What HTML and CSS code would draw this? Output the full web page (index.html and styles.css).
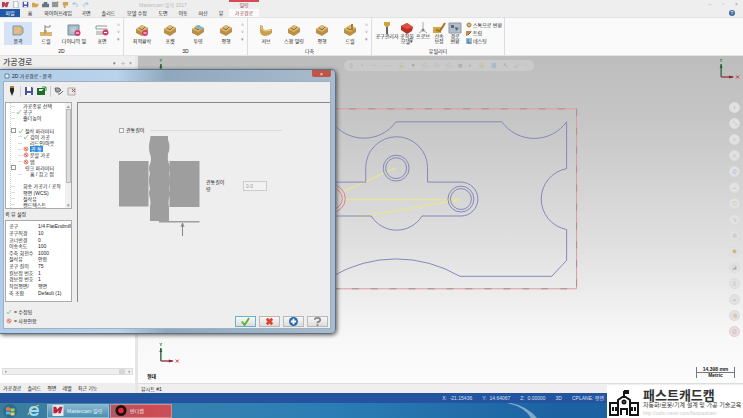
FILE: index.html
```html
<!DOCTYPE html>
<html lang="ko">
<head>
<meta charset="utf-8">
<title>Mastercam 밀링 2017</title>
<link rel="stylesheet" href="styles.css">
</head>
<body>
<svg class="defs" aria-hidden="true">
  <defs>
    <symbol id="contour" viewBox="0 0 14 12"><path d="M2 2h8l2 2v5l-2 2H2z" fill="#dcb477" stroke="#6f9fc4"/><path d="M3 3h6v6H3z" fill="#e2bd85"/></symbol>
    <symbol id="drill" viewBox="0 0 14 12"><path d="M1 8h4v-2h3v2h5v4H1z" fill="#ddb36d"/><path d="M6 1v9M6 3h5V1" fill="none" stroke="#7d8790"/></symbol>
    <symbol id="dynamic" viewBox="0 0 14 12"><path d="M1 1h11v10H1z" fill="#a9bcc4" stroke="#6f8f9f"/><path d="M4 3h5v5H4z" fill="#b9cbd0"/><circle cx="10.500" cy="9" r="3" fill="#d83c74"/><path d="M9 9h3" stroke="#fff"/></symbol>
    <symbol id="face" viewBox="0 0 14 12"><path d="M1 2h11M1 5h11M1 8h7M1 10h7" stroke="#8f9a90" fill="none"/><path d="M1 2v3M12 5v3" stroke="#71a6a0"/><circle cx="10.500" cy="8.500" r="3" fill="#d83c74"/><path d="M9 8.500h3" stroke="#fff"/></symbol>
    <symbol id="block" viewBox="0 0 14 12"><path d="M1 5l6-4 6 3v4l-6 4-6-3z" fill="#b98f45"/><path d="M1 5l6-4 6 3-6 4z" fill="#dcb86f"/><path d="M4 4l3 2 3-3" fill="none" stroke="#806a42"/></symbol>
    <symbol id="blockred" viewBox="0 0 14 12"><use href="#block"/><circle cx="10" cy="9" r="3" fill="#d83c74"/><path d="M8.500 9h3" stroke="#fff"/></symbol>
    <symbol id="blockblue" viewBox="0 0 14 12"><use href="#block"/><path d="M4 2l4-1 4 4-3 1z" fill="#7fb2d6"/></symbol>
    <symbol id="curve" viewBox="0 0 14 12"><path d="M1 1l3 1q-1 4 3 4l6-1v4q-3 3-8 3-4-1-4-5z" fill="#c9a052"/><path d="M2 2q0 7 10 4" fill="none" stroke="#efd59b"/></symbol>
    <symbol id="spindrill" viewBox="0 0 14 12"><use href="#block"/><path d="M9 0v6" stroke="#b07c22" stroke-width="2"/></symbol>
    <symbol id="manager" viewBox="0 0 14 12"><path d="M4 0h6v3L8 5v6H6V5L4 3z" fill="#d1a13c"/><path d="M6 5h2v7H6z" fill="#666"/></symbol>
    <symbol id="redblock" viewBox="0 0 14 12"><path d="M1 4l6-3 6 4-1 4-5 3-6-4z" fill="#bd3025"/><path d="M1 4l6-3 6 4-6 2z" fill="#dc5142"/></symbol>
    <symbol id="probe" viewBox="0 0 14 12"><path d="M7 0v8M3 11l4-3 4 3" fill="none" stroke="#aaa"/><circle cx="7" cy="8" r="1.500" fill="#888"/></symbol>
    <symbol id="trim" viewBox="0 0 14 12"><path d="M1 5h8v6H1z" fill="#d4a64c"/><path d="M4 8l4 1 5-8" fill="none" stroke="#a87721" stroke-width="2"/></symbol>
    <symbol id="transform" viewBox="0 0 14 12"><path d="M1 1h12v10H1z" fill="#b4bec8" stroke="#8f9ba8"/><path d="M3 3h3v3H3zM7 5l4 1-3 3z" fill="#56697c"/></symbol>
    <symbol id="disk" viewBox="0 0 10 10"><path d="M1 1h7l1 1v7H1z" fill="#4b52a8"/><path d="M3 1h4v4H3zM3 7h4v2H3z" fill="#fff"/></symbol>
    <symbol id="diskgreen" viewBox="0 0 10 10"><path d="M0 2h7l1 1v6H0z" fill="#206a2e"/><path d="M2 3h4v2H2z" fill="#d7efd9"/><path d="M5 1h4v4M9 1L5 5" stroke="#2c9a42" fill="none"/></symbol>
    <symbol id="tool" viewBox="0 0 10 10"><path d="M3 0h4v5L5 10 3 5z" fill="#272727"/><path d="M3 0h4v2H3z" fill="#a97f32"/></symbol>
    <symbol id="wrench" viewBox="0 0 10 10"><path d="M1 2h4l2 2-2 2H2z" fill="#a2a6a3" stroke="#666"/><path d="M4 8h2l3-3" fill="none" stroke="#666"/></symbol>
    <symbol id="delete" viewBox="0 0 10 10"><path d="M1 2h7v7H1z" fill="#e6e8ea" stroke="#aaa"/><path d="M5 3l3 3M8 3L5 6" stroke="#df3b38"/></symbol>
    <symbol id="tick" viewBox="0 0 6 6"><path d="M1 3l1 2 3-4" fill="none" stroke="#8ccb99"/></symbol>
    <symbol id="stop" viewBox="0 0 6 6"><circle cx="3" cy="3" r="2" fill="#f8cfc9" stroke="#e58378"/><path d="M2 2l2 2" stroke="#dd6658"/></symbol>
    <symbol id="axis" viewBox="0 0 24 24"><path d="M5 6v13" stroke="#367340" stroke-width="1.500"/><path d="M3.500 10L5 6l1.500 4z" fill="#226338"/><path d="M5 19h12" stroke="#9b4450" stroke-width="1.500"/><path d="M13 17.500l5 1.500-5 1.500z" fill="#822a38"/><path d="M4 1l1 1.500L6 1M5 2.500V4" stroke="#33a14a" fill="none"/><path d="M20 17.500l3 3M23 17.500l-3 3" stroke="#dc3038"/></symbol>
  </defs>
</svg>
<div class="app">
  <header class="titlebar">
    <div class="quick">
      <svg viewBox="0 0 8 8"><path d="M0 1h3l1 2 1-2h3L6 7H4L3 5 2 7H0z" fill="#bd3c52"/></svg>
      <svg viewBox="0 0 8 8"><path d="M2 0h4l1 2v6H2z" fill="#fff" stroke="#9baab9"/></svg>
      <svg><use href="#disk"/></svg>
      <svg viewBox="0 0 8 8"><path d="M0 2h3l1 1h4L6 7H0z" fill="#d5a650"/></svg>
      <svg viewBox="0 0 8 8"><path d="M0 3h8v4H0zM2 1h4v2H2z" fill="#677480"/></svg>
      <svg viewBox="0 0 8 8"><path d="M0 1h7v6H0z" fill="#789bbb"/><path d="M2 6l5-5" stroke="#be923b" stroke-width="2"/></svg>
      <svg viewBox="0 0 8 8"><path d="M1 1h6v4H4v3H2V5H1z" fill="#cda44f"/></svg>
      <svg viewBox="0 0 8 8"><path d="M1 3h4q3 2 0 4M3 1L1 3l2 2" fill="none" stroke="#9eb9dc"/></svg>
      <svg viewBox="0 0 8 8"><path d="M7 3H3q-3 2 0 4M5 1l2 2-2 2" fill="none" stroke="#9eb9dc"/></svg>
    </div>
    <span class="apptitle">Mastercam 밀링 2017</span>
    <span class="context">밀링</span>
    <div class="winctl"><span>–</span><span>▫</span><span>×</span></div>
  </header>
  <nav class="tabs">
    <a href="#" class="file">파일</a><a href="#">홈</a><a href="#" class="wide">와이어프레임</a><a href="#">곡면</a><a href="#" class="mid">솔리드</a><a href="#" class="model">모델 수정</a><a href="#">도면</a><a href="#">이동</a><a href="#">머신</a><a href="#" class="narrow">뷰</a><a href="#" class="active">가공경로</a>
    <span class="help">?</span>
  </nav>
  <section class="ribbon">
    <div class="group">
      <div class="items">
        <button class="on"><svg><use href="#contour"/></svg>윤곽</button>
        <button><svg><use href="#drill"/></svg>드릴</button>
        <button><svg><use href="#dynamic"/></svg>다이나믹 밀</button>
        <button><svg><use href="#face"/></svg>표면</button>
        <span class="more"><i>˄</i><i>˅</i><i>▾</i></span>
      </div><h2>2D</h2>
    </div>
    <div class="group">
      <div class="items">
        <button><svg><use href="#blockred"/></svg>최적황삭</button>
        <button><svg><use href="#block"/></svg>포켓</button>
        <button><svg><use href="#blockblue"/></svg>투영</button>
        <button><svg><use href="#block"/></svg>평행</button>
        <span class="more"><i>˄</i><i>˅</i><i>▾</i></span>
      </div><h2>3D</h2>
    </div>
    <div class="group">
      <div class="items">
        <button><svg><use href="#curve"/></svg>커브</button>
        <button><svg><use href="#block"/></svg>스왑 밀링</button>
        <button><svg><use href="#block"/></svg>평행</button>
        <button><svg><use href="#spindrill"/></svg>드릴</button>
        <span class="more"><i>˄</i><i>˅</i><i>▾</i></span>
      </div><h2>다축</h2>
    </div>
    <div class="group util">
      <div class="items">
        <button class="manager"><svg><use href="#manager"/></svg>공구관리자</button>
        <button><svg><use href="#redblock"/></svg>공작물<br>모델▾</button>
        <button><svg><use href="#probe"/></svg>프로브</button>
        <button><svg><use href="#trim"/></svg>신속<br>보정</button>
        <button><svg><use href="#transform"/></svg>경로<br>변환</button>
        <div class="stack">
          <button><svg viewBox="0 0 6 6"><circle cx="3" cy="3" r="2" fill="#e3bf6b" stroke="#9a793a"/></svg>스톡으로 변환</button>
          <button><svg viewBox="0 0 6 6"><path d="M0 1h6L1 6H0z" fill="#cb8550"/><path d="M2 5l3-3" stroke="#84613b"/></svg>트림</button>
          <button><svg viewBox="0 0 6 6"><path d="M0 0h6v6H0z" fill="#9dbdd3"/><path d="M2 1v4h3" stroke="#426e91" fill="none"/></svg>네스팅</button>
        </div>
      </div><h2>유틸리티</h2>
    </div>
  </section>
  <main class="work">
    <aside class="side">
      <h1>가공경로<span>▾ ⊹ ×</span></h1>
      <div class="sidebody"></div>
      <div class="hscroll"><span>‹</span><span class="grip"></span><span>›</span></div>
      <nav class="sheets"><a href="#">가공경로</a><a href="#">솔리드</a><a href="#">평면</a><a href="#">레벨</a><a href="#">최근 기능</a></nav>
    </aside>
    <section class="view">
      <div class="canvas">
        <svg class="drawing" viewBox="138 55 605 328" fill="none">
          <path d="M330 108H577V288.500H330" stroke="#e19aa0"/>
          <path d="M330 108H577V288.500H330" stroke="#a58f9f" stroke-dasharray="7 12"/>
          <g stroke="#e6e3a0" stroke-width="1.500">
            <path d="M343 191L396 167M343 199H461M356 217L461 199"/>
          </g>
          <g stroke="#8587bb">
            <path d="M330 119A40 40 0 0 0 396 121H502A40 40 0 0 0 567 121V168A31 31 0 0 0 567 229V260L552 276H460A126 126 0 0 0 332 276"/>
            <path d="M330 181.500H365.500V167A31 31 0 0 1 427.500 167V181.500H461A17 17 0 0 1 461 215.500H422A30 30 0 0 1 371 215.500H330"/>
            <circle cx="396" cy="167.500" r="13"/><circle cx="396" cy="167.500" r="10.500"/>
            <circle cx="461" cy="198.500" r="13"/><circle cx="461" cy="198.500" r="10.500"/>
          </g>
          <g stroke="#df7f80"><circle cx="331" cy="198" r="14"/><circle cx="331" cy="198" r="11"/></g>
          <use href="#axis" x="155" y="57" width="24" height="24"/>
          <use href="#axis" x="717" y="57" width="24" height="24"/>
          <use href="#axis" x="155" y="342" width="24" height="24"/>
        </svg>
        <div class="pill"><i>▯</i><i>◔</i><i>····</i><i>·····</i><i class="y">▣</i><i>✦</i><i>◇</i><i>◇</i><i>◇</i><i>◍</i><i>◐</i><i class="y">▤</i><i class="b">▦</i><i>↖</i><i>⤢</i><i>·</i></div>
        <div class="rail"><i>＋</i><i>⤡</i><i>□</i><i>╳</i><i class="b">⊘</i><i>↔</i><i class="y">◎</i><i>↘</i><i>⊕</i><i class="y">◉</i><i>◪</i><i>▯</i><i>◒</i><i class="y">◍</i><i class="r">⊘</i></div>
        <span class="abs">절대</span>
        <div class="scale"><span>14.398 mm</span><span>Metric</span></div>
      </div>
      <nav class="sheets viewsheet"><a href="#">뷰시트 #1</a></nav>
    </section>
  </main>
  <footer class="status"><span>X:&nbsp; -21.15436</span><span>Y:&nbsp; 14.64067</span><span>Z:&nbsp; 0.00000</span><span>3D</span><span>CPLANE: 평면</span></footer>
  <div class="taskbar">
    <svg class="orb" viewBox="0 0 14 14"><circle cx="7" cy="7" r="7" fill="#2d6d91"/><path d="M3 4q2-2 4 0v3q-2-1-4 0z" fill="#e37a42"/><path d="M7.500 4q2 1 4 0v3q-2 1-4 0z" fill="#a7cf58"/><path d="M3 8q2-1 4 0v3q-2-2-4 0z" fill="#67b7e4"/><path d="M7.500 8q2 1 4 0v3q-2 1-4 0z" fill="#f1cf57"/></svg>
    <svg class="ie" viewBox="0 0 14 14"><path d="M3 7h8q0-4-4-4T3 7t4 4q3 0 4-2" fill="none" stroke="#9cdcfa" stroke-width="2"/><path d="M1 11Q3 4 12 1" fill="none" stroke="#e7cf69"/></svg>
    <button class="task"><svg viewBox="0 0 12 12"><path d="M0 0h12v12H0z" fill="#e9e9ec"/><path d="M1 2h3l1 3 3-3h3L9 9H6l1-3-3 3H1z" fill="#bd2437"/></svg>Mastercam 밀링</button>
    <button class="task red"><svg viewBox="0 0 12 12"><circle cx="6" cy="6" r="6" fill="#210f12"/><circle cx="6" cy="6" r="3" fill="#e52b35"/></svg>반디캠</button>
    <svg class="swoosh" viewBox="0 0 60 15"><path d="M4 0Q22 4 28 15H34Q24 3 8 0z" fill="#7da9cb"/></svg>
  </div>
  <div class="brand">
    <svg viewBox="0 0 30 27" fill="none" stroke="#151515" stroke-width="2"><path d="M1 14h8v12H1zM21 14h8v12h-8zM9 26V11l6-4 6 4v15M15 7V2M12 26v-6h6v6"/><circle cx="15" cy="13" r="1.500"/><path d="M15 2h4v2h-4M4 18v4M7 18v4M23 18v4M26 18v4"/></svg>
    <div><strong>패스트캐드캠</strong><span>자동화/로봇/기계 설계 및 가공 기술교육</span><small>http://cafe.naver.com/fastcadcam</small></div>
  </div>
  <section class="dialog" role="dialog" aria-label="2D 가공경로 - 윤곽">
    <header><svg viewBox="0 0 6 6"><path d="M1 1h4v4H1z" fill="#e8eff6" stroke="#67819b"/></svg><span>2D 가공경로 - 윤곽</span><button class="close" aria-label="닫기">×</button></header>
    <div class="dlgbody">
      <div class="dlgtools"><svg><use href="#tool"/></svg><b></b><svg><use href="#disk"/></svg><svg><use href="#diskgreen"/></svg><b></b><svg><use href="#wrench"/></svg><svg><use href="#delete"/></svg></div>
      <div class="dlgmain">
        <div class="left">
          <div class="treebox">
            <ul class="tree">
              <li>가공종류 선택</li>
              <li><svg><use href="#tick"/></svg>공구</li>
              <li>홀더높이</li>
              <li class="gap"></li>
              <li class="root"><svg><use href="#tick"/></svg>절삭 파라미터</li>
              <li class="sub"><svg><use href="#tick"/></svg>깊이 가공</li>
              <li class="sub">리드인/아웃</li>
              <li class="sub"><svg><use href="#stop"/></svg><mark>관 통</mark></li>
              <li class="sub"><svg><use href="#stop"/></svg>분할 가공</li>
              <li class="sub"><svg><use href="#stop"/></svg>탭</li>
              <li class="root">링크 파라미터</li>
              <li class="sub">홈 / 참고 점</li>
              <li class="gap"></li>
              <li>회송 가공기 / 공작</li>
              <li>평면 (WCS)</li>
              <li>절삭유</li>
              <li>캔드텍스트</li>
            </ul>
            <div class="vscroll"><span>▴</span><b></b><span>▾</span></div>
          </div>
          <h3>퀵 뷰 설정</h3>
          <div class="quickview">
            <table>
              <tr><th>공구</th><td>1/4 FlatEndmill</td></tr>
              <tr><th>공구직경</th><td>10</td></tr>
              <tr><th>코너반경</th><td>0</td></tr>
              <tr><th>이송속도</th><td>100</td></tr>
              <tr><th>주축 회전수</th><td>1000</td></tr>
              <tr><th>절삭유</th><td>안함</td></tr>
              <tr><th>공구 길이</th><td>75</td></tr>
              <tr><th>길보정 번호</th><td>1</td></tr>
              <tr><th>경보정 번호</th><td>1</td></tr>
              <tr><th>작업평면/</th><td>평면</td></tr>
              <tr><th>축 조합</th><td>Default (1)</td></tr>
            </table>
          </div>
        </div>
        <div class="panel">
          <div class="fieldset">
            <label class="check"><input type="checkbox">관통길이</label>
            <div class="through">
              <svg class="diagram" viewBox="119 135 81 102"><g fill="#9e9e9e"><path d="M119 161h29.500v45.500H119zM169.500 161h30v46h-30z"/><path d="M150.500 136h17.500v4q3 7 0 14-1 5 1 10 2 4 0 9 2 9 0 16 2 5 0 9-1 5 0 9v14H150v-14q1-4 0-9-2-5 0-9-2-9 0-16-2-5 0-9 2-5 0-10-2-7 0-14z"/><path d="M159 221h40.500v1.500H159z"/></g><path d="M182.500 236v-13M181 227l1.500-4 1.500 4" stroke="#888" fill="none"/></svg>
              <label for="amount">관통길이<br>량</label>
              <input id="amount" type="text" value="0.0" disabled>
            </div>
          </div>
        </div>
      </div>
      <div class="dlgfoot">
        <div class="legend"><span><svg><use href="#tick"/></svg>= 수정됨</span><span><svg><use href="#stop"/></svg>= 사용안함</span></div>
        <div class="actions">
          <button class="ok" aria-label="확인"><svg viewBox="0 0 10 10"><path d="M1 5l3 4 5-8" fill="none" stroke="#56b337" stroke-width="2"/></svg></button>
          <button aria-label="취소"><svg viewBox="0 0 10 10"><path d="M2 2l6 6M8 2L2 8" stroke="#df412a" stroke-width="3"/></svg></button>
          <button aria-label="적용"><svg viewBox="0 0 10 10"><circle cx="5" cy="5" r="5" fill="#2a68ae"/><path d="M5 2v6M2 5h6" stroke="#fff" stroke-width="2"/></svg></button>
          <button aria-label="도움말"><svg viewBox="0 0 10 10"><path d="M2 3q0-2 3-2t3 2-3 3v1" fill="none" stroke="#85858b" stroke-width="2"/><path d="M4 8h2v2H4z" fill="#85858b"/></svg></button>
        </div>
      </div>
    </div>
  </section>
</div>
</body>
</html>
```
FILE: styles.css
```css
* { box-sizing: border-box; }
body, h1, h2, h3, ul { margin: 0; padding: 0; }
body {
  font: 5px/6px "Liberation Sans", "Noto Sans CJK KR", sans-serif;
  color: #222;
  background: #eee;
}
a { color: inherit; text-decoration: none; }
i { font-style: normal; }
button { font: inherit; color: inherit; border: 0; padding: 0; margin: 0; background: none; }
input { font: inherit; margin: 0; }
h1, h2, h3, th { font-weight: 400; }
.defs { position: absolute; width: 0; height: 0; }

.app { position: relative; display: flex; flex-direction: column; height: 100vh; overflow: hidden; }

.titlebar { display: flex; height: 9px; }
.quick { display: flex; gap: 3px; width: 139px; padding: 1px 2px; }
.quick svg { width: 7px; height: 7px; }
.apptitle { width: 90px; padding-top: 2px; color: #bbb; white-space: nowrap; }
.context { width: 30px; border-top: 2px solid #d64a55; text-align: center; color: #a04850; }
.winctl { display: flex; gap: 11px; margin-left: auto; padding: 1px 5px; color: #999; }

.tabs { display: flex; height: 9px; line-height: 9px; border-bottom: 1px solid #e2e2e2; white-space: nowrap; }
.tabs a { width: 20px; text-align: center; }
.tabs a.file { background: #2259a6; color: #fff; }
.tabs .wide { width: 36px; }
.tabs .mid { width: 25px; }
.tabs .model { width: 32px; }
.tabs .narrow { width: 16px; }
.tabs a.active { width: 30px; background: #fafafa; color: #a04850; }
.help { width: 6px; height: 6px; margin: 1px 8px 0 auto; border-radius: 50%; background: #3e6c9f; color: #fff; line-height: 6px; text-align: center; }

.ribbon { display: flex; height: 38px; background: #fafafa; border-bottom: 1px solid #e4e4e4; }
.group { display: flex; flex-direction: column; width: 124px; border-right: 1px solid #ddd; }
.items { display: flex; flex: 1; padding: 4px 0 0 4px; }
.items > button { width: 28px; height: 23px; padding-top: 2px; display: flex; flex-direction: column; align-items: center; gap: 2px; white-space: nowrap; }
.items > button svg { width: 14px; height: 12px; flex: none; }
.items .on { background: #d6e2f6; }
.more { display: flex; flex-direction: column; gap: 1px; margin-left: 1px; color: #999; }
.group h2 { font-size: 5px; line-height: 6px; padding-bottom: 1px; text-align: center; }
.group.util { width: 133px; }
.util .items { padding-left: 3px; }
.util .items > button { width: 16px; gap: 0; line-height: 5px; padding-top: 0; }
.util .items > .manager { width: 24px; }
.stack { display: flex; flex-direction: column; gap: 2px; padding-left: 3px; }
.stack button { display: flex; gap: 1px; align-items: center; white-space: nowrap; }
.stack svg { width: 6px; height: 6px; }

.work { display: flex; flex: 1; min-height: 0; }
.side { display: flex; flex-direction: column; width: 138px; border-right: 3px solid #e6e6e6; background: #fff; }
.side h1 { display: flex; justify-content: space-between; height: 14px; padding: 0 3px; background: #eee; font-size: 8px; line-height: 14px; }
.side h1 span { font-size: 5px; word-spacing: 3px; color: #777; }
.sidebody { flex: 1; }
.hscroll { display: flex; height: 7px; margin: 0 2px 8px; padding: 0 2px; background: #efefef; border: 1px solid #ddd; line-height: 5px; }
.grip { width: 6px; margin-left: auto; margin-right: 3px; background: #d6d6d6; }
.sheets { display: flex; gap: 6px; height: 10px; padding: 0 3px; background: #eee; line-height: 10px; white-space: nowrap; }

.view { display: flex; flex-direction: column; flex: 1; min-width: 0; }
.canvas { position: relative; flex: 1; min-height: 0; background: linear-gradient(#bdbdbd, #c6c6c6 20%, #e0e0e0 58%, #f7f7f7 85%, #fcfcfc); }
.drawing { display: block; width: 100%; height: 100%; }
.pill { position: absolute; left: 206px; top: 4px; display: flex; gap: 7px; padding: 2px 6px; height: 11px; border-radius: 6px; background: #cacaca; color: #999; line-height: 7px; }
.rail { position: absolute; right: 3px; top: 46px; display: flex; flex-direction: column; gap: 5px; }
.rail i { width: 11px; height: 11px; border-radius: 50%; background: #e2e2e2; border: 1px solid #dcdcdc; color: #aaa; line-height: 9px; text-align: center; overflow: hidden; }
.canvas .y { color: #c6b47e; }
.canvas .b { color: #7ba9c6; }
.canvas .r { color: #d88; border-color: #ecc9c9; }
.abs { position: absolute; left: 9px; bottom: 4px; color: #111; font-weight: 700; }
.scale { position: absolute; right: 8px; bottom: 5px; width: 39px; display: flex; flex-direction: column; border: solid #777; border-width: 0 1px; text-align: center; color: #222; line-height: 5px; font-weight: 700; }
.scale span + span { border-top: 1px solid #777; }
.viewsheet { background: #f0eeee; border-top: 1px solid #ddd; }

.status { display: flex; justify-content: flex-end; gap: 10px; height: 10px; padding-right: 139px; background: #2453a0; color: #d6e1f4; line-height: 10px; white-space: nowrap; }
.taskbar { display: flex; align-items: center; height: 15px; background: linear-gradient(90deg, #3c7d9c, #3582b0 25%, #2b7db5 45%, #1c62a2 75%); }
.orb { width: 14px; height: 14px; margin-left: 3px; }
.ie { width: 14px; height: 14px; margin: 0 6px 0 10px; }
.task { display: flex; flex: none; align-items: center; gap: 3px; width: 62px; height: 14px; margin-right: 1px; padding: 0 4px; border: 1px solid #8fbcd1; background: linear-gradient(#86b8cf, #4a8eb1); color: #e6f2f7; white-space: nowrap; }
.task svg { width: 12px; height: 11px; }
.task.red { border-color: #d98b90; background: linear-gradient(90deg, #a85a64, #cd4a52 60%, #c65259); }
.swoosh { width: 60px; height: 15px; margin-left: auto; margin-right: 180px; }

.brand { position: absolute; right: 0; bottom: 0; display: flex; gap: 4px; width: 136px; height: 33px; padding: 4px 0 0 2px; background: #fff; color: #333; white-space: nowrap; }
.brand svg { width: 30px; height: 27px; flex: none; }
.brand div { display: flex; flex-direction: column; }
.brand strong { font-size: 13px; line-height: 13px; }
.brand span { font-size: 6px; line-height: 7px; }
.brand small { font-size: 5px; line-height: 8px; color: #ccc; }

.dialog { position: absolute; left: 0; top: 69px; width: 336px; padding: 0 4px 4px 3px; border: 1px solid #5e7186; border-left: 0; border-radius: 0 5px 5px 0; background: linear-gradient(90deg, #afcce8, #b9d3ea 35%, #8fa7bd 50%, #a9bccd); box-shadow: 1px 1px 4px #555; }
.dialog > header { display: flex; align-items: center; gap: 2px; height: 11px; padding-left: 1px; color: #222; }
.dialog > header svg { width: 6px; height: 6px; }
.close { width: 19px; height: 7px; margin: 0 0 4px auto; border-radius: 0 0 2px 2px; background: #bd5549; color: #fff; line-height: 6px; }
.dlgbody { background: #eee; border: 1px solid #9eb1c2; }
.dlgtools { display: flex; align-items: center; gap: 3px; height: 20px; padding: 0 3px 2px; }
.dlgtools svg { width: 10px; height: 10px; }
.dlgtools b { width: 1px; height: 11px; background: #ccc; }
.dlgmain { display: flex; gap: 5px; }
.left { width: 68px; padding-left: 1px; }
.treebox { display: flex; height: 107px; border: 1px solid #aaa; background: #fff; }
.tree { display: grid; flex: 1; grid-template-rows: repeat(17, 1fr); list-style: none; margin-left: 4px; border-left: 1px dotted #ccc; }
.tree li { display: flex; align-items: center; padding-left: 12px; white-space: nowrap; line-height: 6px; min-height: 0; background: linear-gradient(#ddd, #ddd) 0 50% / 4px 1px no-repeat; }
.tree li svg { width: 6px; height: 6px; margin-left: -7px; margin-right: 1px; flex: none; }
.tree .sub { padding-left: 19px; background-position: 7px 50%; }
.tree .gap { background: none; }
.tree .root::before { content: ""; width: 3px; height: 3px; margin-left: -12px; margin-right: 9px; border: 1px solid #999; background: #fff; }
.tree mark { padding: 0 1px; background: #2f8ee0; color: #fff; }
.vscroll { display: flex; flex-direction: column; align-items: center; width: 6px; background: #f0f0f0; color: #888; }
.vscroll b { width: 5px; height: 74px; margin-bottom: auto; border: 1px solid #bbb; background: #dcdcdc; }
.left h3 { height: 11px; font-size: 5px; line-height: 11px; }
.quickview { height: 82px; padding: 2px 0 0 3px; border: 1px solid #aaa; background: #fff; overflow: hidden; }
.quickview table { width: 100%; height: 73px; border-collapse: collapse; table-layout: fixed; }
.quickview th, .quickview td { padding: 0; line-height: 6px; text-align: left; white-space: nowrap; }
.quickview th { width: 29px; }
.panel { flex: 1; padding: 24px 48px 40px 41px; border: solid #888; border-width: 1px 0 0 1px; }
.check { display: flex; align-items: center; gap: 2px; height: 6px; }
.check::after { content: ""; flex: 1; margin-left: 4px; height: 1px; background: #ddd; }
.check input { appearance: none; width: 5px; height: 5px; border: 1px solid #aaa; background: #f8f8f8; }
.through { display: flex; align-items: center; padding-top: 2px; }
.diagram { width: 81px; height: 102px; margin-right: 6px; }
.through label { width: 37px; line-height: 7px; }
.through input { width: 24px; height: 10px; padding: 0 2px; border: 1px solid #ccc; background: #f2f2f2; color: #999; }
.dlgfoot { display: flex; justify-content: space-between; align-items: flex-end; height: 26px; padding: 0 2px 0 2px; }
.legend { display: flex; flex-direction: column; gap: 3px; padding-bottom: 4px; }
.legend span { display: flex; gap: 2px; }
.legend svg { width: 6px; height: 6px; }
.actions { display: flex; gap: 3px; padding-bottom: 1px; }
.actions button { display: flex; align-items: center; justify-content: center; width: 21px; height: 11px; border: 1px solid #b8b8b8; background: linear-gradient(#f8f8f8, #dcdcdc); }
.actions .ok { border-color: #67b2cf; }
.actions svg { width: 9px; height: 9px; }
```
